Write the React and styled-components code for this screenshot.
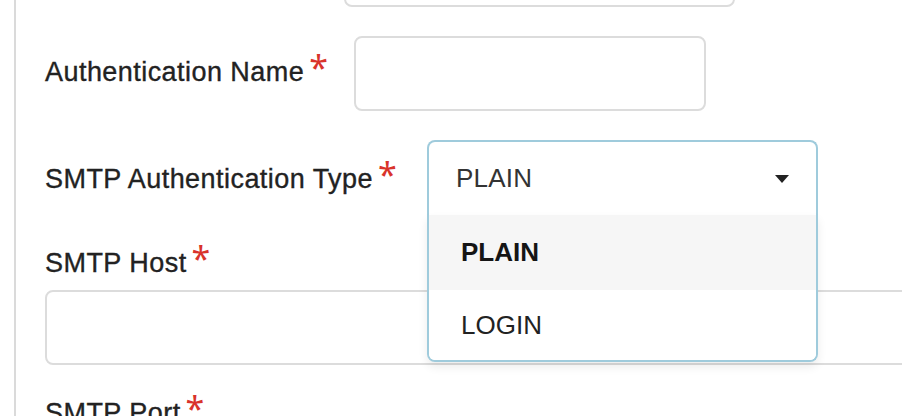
import React from "react";
import styled, { createGlobalStyle } from "styled-components";

const GlobalStyle = createGlobalStyle`
  html, body {
    margin: 0;
    padding: 0;
    background: #ffffff;
    overflow: hidden;
  }
  body {
    font-family: "Liberation Sans", Arial, sans-serif;
  }
  * { box-sizing: border-box; }
`;

const Page = styled.div`
  width: 902px;
  height: 416px;
  overflow: hidden;
  padding-left: 14px;
`;

const Panel = styled.div`
  border-left: 2px solid #dadada;
  margin-top: -68px;
  padding: 0 0 200px 29px;
  display: flex;
  flex-direction: column;
  gap: 29px;
`;

const InlineRow = styled.div`
  display: flex;
  align-items: center;
`;

const StackedField = styled.div`
  display: flex;
  flex-direction: column;
  gap: 11px;
  padding-top: 3px;
`;

const Label = styled.label`
  flex-shrink: 0;
  width: ${(p) => (p.$width ? `${p.$width}px` : "auto")};
  margin-top: ${(p) => p.$shift || 0}px;
  font-size: 27px;
  line-height: 32px;
  letter-spacing: 0.45px;
  color: #222222;
  -webkit-text-stroke: 0.35px #222222;
  white-space: nowrap;
`;

const Required = styled.span`
  font-family: "Noto Sans", sans-serif;
  font-size: 34px;
  line-height: 0;
  color: #d9332b;
  -webkit-text-stroke: 0;
  margin-left: 5px;
  vertical-align: 1px;
`;

const TextInput = styled.input`
  width: ${(p) => p.$width}px;
  height: 75px;
  border: 2px solid #dcdcdc;
  border-radius: 8px;
  background: #ffffff;
  padding: 0 24px;
  font: inherit;
  font-size: 26px;
  outline: none;
`;

const SelectWrap = styled.div`
  position: relative;
  width: 391px;
`;

const SelectBox = styled.div`
  height: 75px;
  border: 2px solid #9fcbdc;
  border-bottom: none;
  border-radius: 8px 8px 0 0;
  display: flex;
  align-items: center;
  justify-content: space-between;
  padding: 0 27px 0 27px;
  background: #ffffff;
`;

const SelectValue = styled.span`
  font-size: 26px;
  color: #333333;
  letter-spacing: 0.2px;
`;

const Caret = styled.svg`
  display: block;
  width: 14px;
  height: 8px;
  margin-top: 1px;
`;

const Menu = styled.ul`
  position: absolute;
  top: 100%;
  left: 0;
  right: 0;
  margin: 0;
  padding: 0;
  list-style: none;
  background: #ffffff;
  border: 2px solid #9fcbdc;
  border-top: none;
  border-radius: 0 0 8px 8px;
  box-shadow: 0 5px 10px rgba(0, 0, 0, 0.08);
  overflow: hidden;
  z-index: 2;
`;

const Option = styled.li`
  height: ${(p) => p.$height}px;
  display: flex;
  align-items: center;
  padding-left: 32px;
  font-size: 26px;
  font-weight: ${(p) => (p.$selected ? 700 : 400)};
  color: ${(p) => (p.$selected ? "#151515" : "#222222")};
  background: ${(p) => (p.$selected ? "#f6f6f6" : "#ffffff")};
`;

function Field({ label, required = true, children }) {
  return (
    <StackedField>
      <Label>
        {label}
        {required && <Required>*</Required>}
      </Label>
      {children}
    </StackedField>
  );
}

export default function App() {
  return (
    <>
      <GlobalStyle />
      <Page>
        <Panel>
          <InlineRow>
            <Label $width={299} />
            <TextInput $width={391} />
          </InlineRow>

          <InlineRow>
            <Label $width={309} $shift={-4}>
              Authentication Name<Required>*</Required>
            </Label>
            <TextInput $width={352} />
          </InlineRow>

          <InlineRow>
            <Label $width={382} $shift={2}>
              SMTP Authentication Type<Required>*</Required>
            </Label>
            <SelectWrap>
              <SelectBox>
                <SelectValue>PLAIN</SelectValue>
                <Caret viewBox="0 0 14 8" aria-hidden="true">
                  <path d="M0 0 H14 L7 8 Z" fill="#222222" />
                </Caret>
              </SelectBox>
              <Menu>
                <Option $selected $height={75}>PLAIN</Option>
                <Option $height={70}>LOGIN</Option>
              </Menu>
            </SelectWrap>
          </InlineRow>

          <Field label="SMTP Host">
            <TextInput $width={900} />
          </Field>

          <Field label="SMTP Port">
            <TextInput $width={900} />
          </Field>
        </Panel>
      </Page>
    </>
  );
}
